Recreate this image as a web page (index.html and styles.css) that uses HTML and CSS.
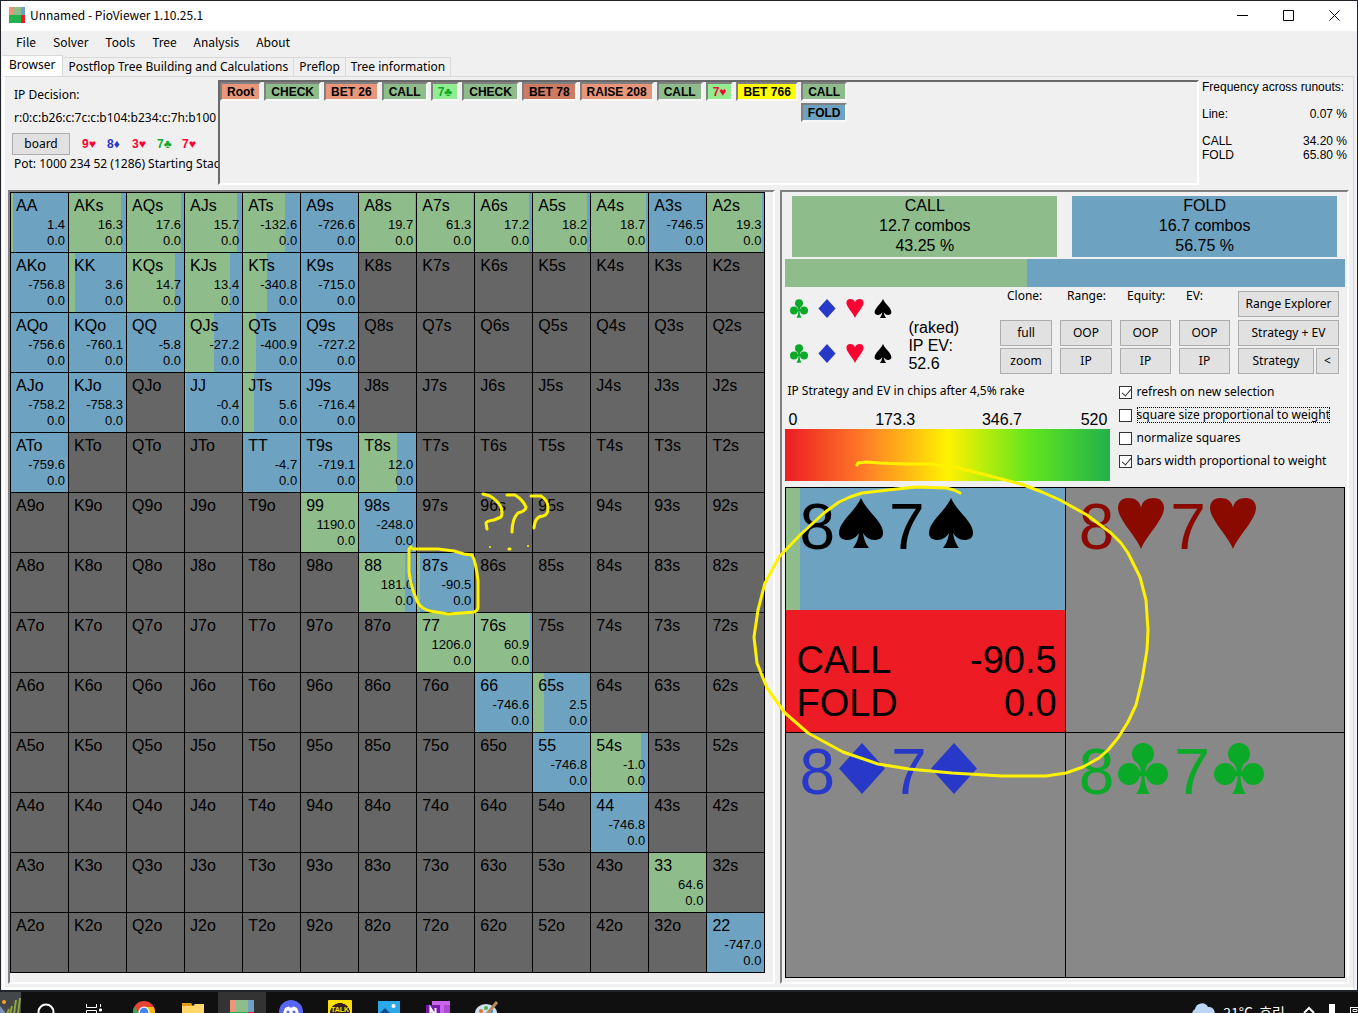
FILE: index.html
```html
<!DOCTYPE html>
<html lang="en">
<head>
<meta charset="utf-8">
<title>Unnamed - PioViewer 1.10.25.1</title>
<link rel="stylesheet" href="styles.css">
</head>
<body>
<svg class="defs" aria-hidden="true">
  <symbol id="spade" viewBox="0 0 44 50"><path d="M22 0C26 9 34 16 39 23C42 27 44 31 44 35C44 40 40 42 35.500 42C30.500 42 26.500 39 24 35C25 42 27 46 30 50H14C17 46 19 42 20 35C17.500 39 13.500 42 8.500 42C4 42 0 40 0 35C0 31 2 27 5 23C10 16 18 9 22 0Z"/></symbol>
  <symbol id="heart" viewBox="0 0 46 51"><path d="M23 51C19 41 11 33 5 23C2 18 0 14 0 10C0 4 4 0 10 0C17 0 22 3 23 10C24 3 29 0 36 0C42 0 46 4 46 10C46 14 44 18 41 23C35 33 27 41 23 51Z"/></symbol>
  <symbol id="diamond" viewBox="0 0 46 51"><path d="M23 0L46 25.500L23 51L0 25.500Z"/></symbol>
  <symbol id="club" viewBox="0 0 50 51"><circle cx="25" cy="11" r="11"/><circle cx="11" cy="31" r="11"/><circle cx="39" cy="31" r="11"/><path d="M20 20H30L27 28L33 26V34L26.500 33Q27 45 32 51H18Q23 45 23.500 33L17 34V26L23 28Z"/></symbol>
  <symbol id="app" viewBox="0 0 24 24"><path fill="#e9967a" d="M0 0h6v12H0z"/><path fill="#8fbc8b" d="M6 0h12v12H6z"/><path fill="#6da2c0" d="M18 0h6v12h-6z"/><path fill="#22b14c" d="M0 12h18v12H0z"/><path fill="#ed1c24" d="M18 12h6v12h-6z"/></symbol>
</svg>

<div class="window">
  <header class="titlebar">
    <svg class="title-icon"><use href="#app"/></svg>
    <h1 class="title">Unnamed - PioViewer 1.10.25.1</h1>
    <div class="window-buttons">
      <button class="winbtn" aria-label="Minimize"><svg viewBox="0 0 11 11"><path d="M0 5.500h11"/></svg></button>
      <button class="winbtn" aria-label="Maximize"><svg viewBox="0 0 11 11"><path d="M.5.5h10v10H.5z"/></svg></button>
      <button class="winbtn" aria-label="Close"><svg viewBox="0 0 11 11"><path d="M.5.5l10 10M10.500.5l-10 10"/></svg></button>
    </div>
  </header>

  <nav class="menubar">
    <button>File</button><button>Solver</button><button>Tools</button><button>Tree</button><button>Analysis</button><button>About</button>
  </nav>

  <div class="tabs" role="tablist">
    <button class="tab active" role="tab" aria-selected="true">Browser</button>
    <button class="tab" role="tab">Postflop Tree Building and Calculations</button>
    <button class="tab" role="tab">Preflop</button>
    <button class="tab" role="tab">Tree information</button>
  </div>

  <main class="page">
    <section class="top">
      <div class="decision">
        <p>IP Decision:</p>
        <p class="line">r:0:c:b26:c:7c:c:b104:b234:c:7h:b100</p>
        <div class="board-row">
          <button class="btn board">board</button>
          <span class="card red">9♥</span><span class="card blue">8♦</span><span class="card red">3♥</span><span class="card green">7♣</span><span class="card red">7♥</span>
        </div>
        <p class="pot">Pot: 1000 234 52 (1286) Starting Stac</p>
      </div>
      <div class="history">
        <button class="chip bet">Root</button>
        <button class="chip call">CHECK</button>
        <button class="chip bet">BET 26</button>
        <button class="chip call">CALL</button>
        <button class="chip deal green">7♣</button>
        <button class="chip call">CHECK</button>
        <button class="chip bet2">BET 78</button>
        <button class="chip bet">RAISE 208</button>
        <button class="chip call">CALL</button>
        <button class="chip deal red">7♥</button>
        <button class="chip current">BET 766</button>
        <div class="choices">
          <button class="chip call">CALL</button>
          <button class="chip fold">FOLD</button>
        </div>
      </div>
      <dl class="frequency">
        <dt class="wide">Frequency across runouts:</dt>
        <dt class="spaced">Line:</dt><dd class="spaced">0.07 %</dd>
        <dt>CALL</dt><dd>34.20 %</dd>
        <dt>FOLD</dt><dd>65.80 %</dd>
      </dl>
    </section>

    <div class="panels">
      <section class="panel matrix-panel">
        <table class="matrix" aria-label="Hand matrix"><tbody id="matrix"></tbody></table>
      </section>

      <section class="panel detail-panel">
        <div class="actions">
          <div class="action call"><span>CALL</span><span>12.7 combos</span><span>43.25 %</span></div>
          <div class="action fold"><span>FOLD</span><span>16.7 combos</span><span>56.75 %</span></div>
        </div>
        <div class="split-bar" style="--call: 43.25%"></div>

        <div class="controls">
          <div class="suit-filter">
            <svg class="green"><use href="#club"/></svg><svg class="blue"><use href="#diamond"/></svg><svg class="red"><use href="#heart"/></svg><svg><use href="#spade"/></svg>
            <svg class="green"><use href="#club"/></svg><svg class="blue"><use href="#diamond"/></svg><svg class="red"><use href="#heart"/></svg><svg><use href="#spade"/></svg>
          </div>
          <p class="ev">(raked)<br>IP EV:<br>52.6</p>
          <div class="button-grid">
            <span>Clone:</span><span>Range:</span><span>Equity:</span><span>EV:</span><button class="btn">Range Explorer</button>
            <button class="btn">full</button><button class="btn">OOP</button><button class="btn">OOP</button><button class="btn">OOP</button><button class="btn">Strategy + EV</button>
            <button class="btn">zoom</button><button class="btn">IP</button><button class="btn">IP</button><button class="btn">IP</button>
            <div class="pair"><button class="btn">Strategy</button><button class="btn">&lt;</button></div>
          </div>
        </div>

        <div class="legend-row">
          <div class="legend">
            <p class="caption">IP Strategy and EV in chips after 4,5% rake</p>
            <div class="ticks"><span>0</span><span>173.3</span><span>346.7</span><span>520</span></div>
            <div class="gradient"></div>
          </div>
          <div class="options">
            <label><input type="checkbox" checked><span>refresh on new selection</span></label>
            <label><input type="checkbox"><span class="focused">square size proportional to weight</span></label>
            <label><input type="checkbox"><span>normalize squares</span></label>
            <label><input type="checkbox" checked><span>bars width proportional to weight</span></label>
          </div>
        </div>

        <div class="combos">
          <div class="combo live">
            <div class="combo-strategy" style="--call: 5%">
              <div class="hand">8<svg class="spade"><use href="#spade"/></svg>7<svg class="spade"><use href="#spade"/></svg></div>
            </div>
            <dl class="combo-ev"><dt>CALL</dt><dd>-90.5</dd><dt>FOLD</dt><dd>0.0</dd></dl>
          </div>
          <div class="combo"><div class="hand darkred">8<svg><use href="#heart"/></svg>7<svg><use href="#heart"/></svg></div></div>
          <div class="combo"><div class="hand blue">8<svg><use href="#diamond"/></svg>7<svg><use href="#diamond"/></svg></div></div>
          <div class="combo"><div class="hand green">8<svg class="club"><use href="#club"/></svg>7<svg class="club"><use href="#club"/></svg></div></div>
        </div>
      </section>
    </div>
  </main>
</div>

<footer class="taskbar">
  <svg class="wallpaper" viewBox="0 0 21 40"><path fill="#44474a" d="M0 0h21v40H0z"/><circle cx="4" cy="10" r="2" fill="#f2a51d"/><path fill="#7b93b4" d="M0 14l5 6 3 20H0z"/><path stroke="#8fa63a" stroke-width="2" d="M10 22l2-8M14 22l2-14M18 22l2-16M7 22l2-5"/></svg>
  <button class="task" aria-label="Search"><svg viewBox="0 0 24 24"><circle cx="12" cy="12" r="7.500" fill="none" stroke="#fff" stroke-width="2"/></svg></button>
  <button class="task" aria-label="Task view"><svg viewBox="0 0 24 24" fill="none" stroke="#fff"><path d="M3.500 4v3.500h10V4M3.500 20v-9.500h10V20M17.500 4v3M17.500 13v7"/><path fill="#fff" d="M16.500 9h2v2h-2z"/></svg></button>
  <button class="task" aria-label="Chrome"><svg viewBox="0 0 24 24"><circle cx="12" cy="12" r="11" fill="#ea4335"/><path fill="#34a853" d="M2.500 6.500L9 17l3 6A11 11 0 0 1 2.500 6.500z"/><path fill="#fbbc05" d="M12 7h9.800A11 11 0 0 1 12 23l5-9z"/><circle cx="12" cy="12" r="5.500" fill="#fff"/><circle cx="12" cy="12" r="4.200" fill="#4285f4"/></svg></button>
  <button class="task" aria-label="Explorer"><svg viewBox="0 0 24 24"><path fill="#e09c13" d="M1 3h9l2 3H1z"/><path fill="#ffd76a" d="M1 6h11l2-2h9v18H1z"/></svg></button>
  <button class="task current-task" aria-label="PioViewer"><svg><use href="#app"/></svg></button>
  <button class="task" aria-label="Discord"><svg viewBox="0 0 24 24"><circle cx="12" cy="12" r="12" fill="#5865f2"/><path fill="#fff" d="M6 8q3-2 4-1.500l.5 1h3l.5-1q1-.5 4 1.500q2 4 2 8q-3 2-4 1l-1-1H9l-1 1q-1 1-4-1q0-4 2-8z"/><circle cx="9" cy="12" r="1.500" fill="#5865f2"/><circle cx="15" cy="12" r="1.500" fill="#5865f2"/></svg></button>
  <button class="task talk" aria-label="KakaoTalk"><span>TALK</span></button>
  <button class="task" aria-label="Photos"><svg viewBox="0 0 24 24"><path fill="#2aa8e8" d="M1 1h22v22H1z"/><circle cx="16.500" cy="6" r="2" fill="#fff"/><path fill="#0f4c88" d="M1 15l7-7 15 15H1z"/></svg></button>
  <button class="task" aria-label="OneNote"><svg viewBox="0 0 24 24"><path fill="#ca64ea" d="M6 1h18v22H6z"/><path fill="#ae4bd5" d="M18 5h6v18h-6z"/><path fill="#7719aa" d="M0 5h14v14H0z"/><path fill="none" stroke="#fff" stroke-width="2" d="M4.500 16V8l5 8V8"/></svg></button>
  <button class="task" aria-label="Paint"><svg viewBox="0 0 24 24"><ellipse cx="11" cy="13" rx="11" ry="9" fill="#cfe3ee"/><circle cx="6" cy="11" r="2" fill="#e8722e"/><circle cx="11" cy="8" r="2" fill="#4bae4f"/><circle cx="16" cy="11" r="2" fill="#3a86d8"/><path stroke="#b98a5c" stroke-width="3" d="M12 14L22 2"/></svg></button>
  <div class="tray">
    <svg class="cloud" viewBox="0 0 24 24"><path fill="#bcd6f5" d="M4 18a5 5 0 0 1 0-9a7 7 0 0 1 13-2a6 6 0 0 1 4 11z"/></svg>
    <span>21°C&nbsp; 흐림</span>
    <svg class="chevron" viewBox="0 0 12 12"><path fill="none" stroke="#fff" stroke-width="2" d="M1 7l5-5 5 5"/></svg>
    <svg class="mic" viewBox="0 0 12 24"><path fill="#fff" d="M3 4h6v16H3z"/></svg>
    <svg class="net" viewBox="0 0 9 24" fill="none" stroke="#fff"><path d="M1 7.500h8M1.500 7v8h8M4 9.500h4v2H4z"/></svg>
  </div>
</footer>

<svg class="ink" aria-hidden="true">
  <path d="M857 465L858 463L866 462L880 463L905 464L930 464L955 467L990 476L1021 484L1042 492L1060 500L1087 515L1111 533L1121 543L1128 553L1140 577L1146 600L1148 630L1147 650L1142 680L1136 705L1128 722L1118 738L1108 750L1099 758L1083 767L1066 773L1046 776L1002 776L952 773L909 769L878 764L843 752L808 733L785 713L767 688L757 663L754 637L758 610L765 583L779 557L800 535L824 513L839 502L850 497L862 493L897 489L917 487L946 488L954 490L960 493"/>
  <path d="M411 547L409 549L409 572Q411 588 418 603Q422 609 430 611L448 614L462 613L474 612Q478 611 478 607L478 581Q476 562 472 555L464 554L454 551L438 549L413 549"/>
  <path d="M483 494L490 496Q497 500 501 507Q503 514 501 517L494 520Q486 521 486 523L487 529"/>
  <path d="M507 495L515 495Q523 500 526 507Q526 511 518 513Q512 519 512 532"/>
  <path d="M531 496L541 496Q548 500 548 508Q548 515 543 516Q535 516 534 528"/>
  <path class="dots" d="M490 547h0M528 546h0"/><path d="M509 549h1"/>
</svg>
<script src="matrix.js"></script>
</body>
</html>
```

FILE: styles.css
```css
:root {
  --green: #8fbc8b;
  --blue: #6da2c0;
  --face: #f0f0f0;
  --ui: "Noto Sans", "Noto Sans CJK KR", sans-serif;
  --arial: "Liberation Sans", Arial, sans-serif;
}
* { box-sizing: border-box; }
body {
  margin: 0;
  padding: 1px 1px 0;
  height: 100vh;
  overflow: hidden;
  background: #20232a;
  color: #000;
  font: 12px/16px var(--ui);
}
p, dl, dd, h1 { margin: 0; }
button { font: inherit; color: inherit; padding: 0; border: 0; background: none; white-space: nowrap; }
.defs { position: absolute; width: 0; height: 0; }

.red { color: #ff0033; fill: #ff0033; }
.blue { color: #2838c8; fill: #2838c8; }
.green { color: #0aaa28; fill: #0aaa28; }
.darkred { color: #8b0a00; fill: #8b0a00; }

.window { background: var(--face); }
.titlebar { display: flex; align-items: center; height: 30px; padding: 0 0 2px 8px; background: #fff; }
.title-icon { width: 16px; height: 16px; margin-right: 5px; }
.title { flex: 1; font: 12px/16px "Noto Sans CJK KR", sans-serif; }
.window-buttons { display: flex; }
.winbtn { width: 46px; height: 28px; }
.winbtn svg { display: block; width: 11px; height: 11px; margin: auto; fill: none; stroke: #000; }

.menubar { display: flex; gap: 17px; height: 24px; padding: 0 0 2px 15px; font-family: "Noto Sans CJK KR", sans-serif; }
.tabs { display: flex; align-items: flex-end; height: 21px; padding-left: 1px; }
.tab { height: 19px; padding: 0 5px; border: 1px solid #d9d9d9; border-left: 0; border-bottom: 0; }
.tab.active { height: 21px; padding: 0 7px 3px; background: #fff; }

.page { padding: 3px 4px 3px 3px; margin: 0 3px 2px 1px; border: 1px solid #d9d9d9; border-left: 3px solid #fff; border-bottom: 3px solid #fff; }
.top { display: flex; height: 105px; margin-left: 3px; }
.decision { flex: 0 0 207px; padding: 7px 0 0 3px; white-space: nowrap; overflow: hidden; }
.line { margin: 7px 0; }
.board-row { display: flex; align-items: center; gap: 10px; }
.pot { margin-top: 1px; }
.btn { height: 26px; border: 1px solid #adadad; background: #e1e1e1; }
.board { width: 58px; height: 22px; margin: 0 2px 0 -2px; }
.card { width: 15px; font: bold 12px/16px "Liberation Sans", "DejaVu Sans", sans-serif; }
.history {
  flex: 1;
  display: flex;
  align-items: flex-start;
  gap: 3px;
  border: 2px solid;
  border-color: #696969 #fff #fff #696969;
}
.choices { display: flex; flex-direction: column; gap: 2px; }
.chip {
  height: 19px;
  padding: 0 5px;
  border: 2px solid;
  border-color: #808080 #f8f8f8 #f8f8f8 #808080;
  font: bold 12px/14px "Liberation Sans", "DejaVu Sans", sans-serif;
}
.call { background: var(--green); }
.fold { background: var(--blue); }
.bet { background: #e9967a; }
.bet2 { background: #cd7b63; }
.deal { background: #90ee90; }
.current { background: #ff0; }
.frequency {
  flex: 0 0 150px;
  display: grid;
  grid-template-columns: 1fr auto;
  align-content: start;
  padding: 0 2px 0 3px;
  font: 12px/14px var(--arial);
}
.frequency dd { text-align: right; }
.wide { grid-column: 1 / 3; white-space: nowrap; }
.spaced { margin: 13px 0; }

.panels { display: grid; grid-template-columns: 768fr 569fr; gap: 5px; margin-top: 5px; }
.panel { border: 2px solid; border-color: #808080 #fff #fff #808080; }
.matrix-panel { padding: 0 8px 9px 0; }
.matrix { width: 100%; table-layout: fixed; border-spacing: 0; border: solid #000; border-width: 1px 0 0 1px; font: 13px/16px var(--arial); }
.matrix td {
  height: 60px;
  padding: 3px 3px 0 5px;
  border: solid #000;
  border-width: 0 1px 1px 0;
  background: #666;
  text-align: right;
  vertical-align: top;
}
.matrix td.played { background: linear-gradient(to right, var(--green) var(--call), var(--blue) var(--call)); }
.matrix b { display: block; margin-bottom: 1px; font: 16px/20px var(--arial); text-align: left; }
.matrix span { display: block; }

.detail-panel { display: flex; flex-direction: column; padding: 4px 2px 4px 3px; }
.actions { display: grid; grid-template-columns: 1fr 1fr; gap: 15px; padding: 0 8px 0 7px; }
.action { display: flex; flex-direction: column; height: 61px; font: 16px/20px var(--arial); text-align: center; }
.split-bar { height: 28px; margin-top: 2px; background: linear-gradient(to right, var(--green) var(--call), var(--blue) var(--call)); }
.controls { display: flex; padding: 4px 6px 0 5px; }
.suit-filter { display: grid; grid-template-columns: repeat(4, 18px); grid-auto-rows: 19px; gap: 26px 10px; padding-top: 8px; }
.suit-filter svg { width: 18px; height: 19px; }
.ev { margin: 28px 0 0 16px; font: 16px/18px var(--arial); flex: 1; }
.button-grid { display: grid; grid-template-columns: 52px 52px 51px 51px 101px; gap: 3px 8px; }
.button-grid > .btn:nth-child(n+11), .pair { margin-top: -1px; }
.button-grid > span { padding-left: 7px; line-height: 10px; }
.pair { display: grid; grid-template-columns: 1fr 23px; gap: 2px; }
.legend-row { display: flex; justify-content: space-between; padding-right: 15px; margin-top: 9px; }
.legend { width: 325px; }
.caption { padding-left: 2px; }
.ticks { display: grid; grid-template-columns: 87fr 107fr 99fr 26fr; margin-top: 11px; padding: 0 3px; font: 16px/19px var(--arial); }
.gradient { height: 52px; background: linear-gradient(to right, #ed1c24, #ff7f27 25%, #fff200 50%, #62e61c 75%, #22b14c); }
.options { display: flex; flex-direction: column; gap: 7px; padding-top: 1px; }
.options label { display: flex; align-items: center; gap: 5px; }
.options input { appearance: none; width: 13px; height: 13px; margin: 0; border: 1px solid #333; background: #fff; }
.options input:checked::after { content: ""; display: block; width: 4px; height: 8px; margin: 0 0 0 4px; border: solid #333; border-width: 0 1px 1px 0; transform: rotate(40deg); }
.focused { outline: 1px dotted #000; outline-offset: -1px; }

.combos { flex: 1; display: grid; grid-template: 1fr 1fr / 1fr 1fr; gap: 1px; margin-top: 6px; padding: 1px; background: #000; }
.combo { background: #888; }
.live { display: grid; grid-template-rows: 1fr 1fr; }
.combo-strategy { background: linear-gradient(to right, var(--green) var(--call), var(--blue) var(--call)); }
.combo-ev { display: grid; grid-template-columns: auto auto; justify-content: space-between; align-content: end; padding: 0 8px 7px 10px; background: #ed1c24; font: 38px/43px var(--arial); }
.combo-ev dd { text-align: right; }
.hand { display: flex; padding: 3px 0 0 13px; font: 64px/72px var(--arial); }
.hand svg { width: 46px; height: 51px; margin: 7px 6px 0 4px; }
.hand .spade { width: 44px; height: 50px; }
.hand .club { width: 50px; }

.taskbar { display: flex; gap: 1px; height: 40px; margin: 0 -1px; background: #101010; color: #fff; }
.wallpaper { width: 21px; height: 40px; }
.task { display: grid; place-items: center; width: 48px; height: 40px; }
.task svg { width: 24px; height: 24px; }
.current-task { background: #333; }
.talk span { width: 24px; height: 24px; border: 2px solid #fae100; border-top-width: 3px; border-radius: 1px; background: radial-gradient(ellipse, #3b1e1e 68%, #fae100 72%); color: #fae100; font: bold 7px/14px var(--arial); }
.tray { flex: 1; display: flex; justify-content: flex-end; align-items: center; font: 14px/20px "Noto Sans CJK KR", sans-serif; }
.cloud { width: 24px; height: 24px; margin-right: 8px; }
.chevron { width: 12px; height: 12px; margin: 0 11px 0 18px; }
.mic { width: 12px; height: 24px; margin-right: 11px; }
.net { width: 9px; height: 24px; }

.ink { position: absolute; left: 0; top: 0; width: 1358px; height: 992px; fill: none; stroke: #fff200; stroke-width: 3; stroke-linecap: round; stroke-linejoin: round; pointer-events: none; }
.ink .dots { stroke-width: 2; }
```

FILE: matrix.js
```js
// Played hands: share of CALL in percent, EV of CALL. FOLD is always 0.0.
const hands = {
  AA: [4, "1.4"], AKs: [92, "16.3"], AQs: [95, "17.6"], AJs: [92, "15.7"], ATs: [74, "-132.6"],
  A9s: [0, "-726.6"], A8s: [98, "19.7"], A7s: [98, "61.3"], A6s: [95, "17.2"], A5s: [95, "18.2"],
  A4s: [96, "18.7"], A3s: [0, "-746.5"], A2s: [96, "19.3"],
  AKo: [0, "-756.8"], KK: [11, "3.6"], KQs: [84, "14.7"], KJs: [79, "13.4"], KTs: [42, "-340.8"], K9s: [0, "-715.0"],
  AQo: [0, "-756.6"], KQo: [0, "-760.1"], QQ: [0, "-5.8"], QJs: [51, "-27.2"], QTs: [23, "-400.9"], Q9s: [0, "-727.2"],
  AJo: [0, "-758.2"], KJo: [0, "-758.3"], JJ: [2, "-0.4"], JTs: [19, "5.6"], J9s: [0, "-716.4"],
  ATo: [0, "-759.6"], TT: [0, "-4.7"], T9s: [0, "-719.1"], T8s: [67, "12.0"],
  99: [100, "1190.0"], "98s": [0, "-248.0"],
  88: [81, "181.0"], "87s": [5, "-90.5"],
  77: [100, "1206.0"], "76s": [96, "60.9"],
  66: [0, "-746.6"], "65s": [19, "2.5"],
  55: [0, "-746.8"], "54s": [88, "-1.0"],
  44: [0, "-746.8"], 33: [100, "64.6"], 22: [0, "-747.0"]
};
const ranks = "AKQJT98765432";
const body = document.getElementById("matrix");

for (let r = 0; r < 13; r++) {
  const row = body.insertRow();
  for (let c = 0; c < 13; c++) {
    const name = r === c ? ranks[r] + ranks[r]
      : r < c ? ranks[r] + ranks[c] + "s"
      : ranks[c] + ranks[r] + "o";
    const cell = row.insertCell();
    cell.innerHTML = `<b>${name}</b>`;
    const hand = hands[name];
    if (hand) {
      cell.className = "played";
      cell.style.setProperty("--call", hand[0] + "%");
      cell.innerHTML += `<span>${hand[1]}</span><span>0.0</span>`;
    }
  }
}
```
